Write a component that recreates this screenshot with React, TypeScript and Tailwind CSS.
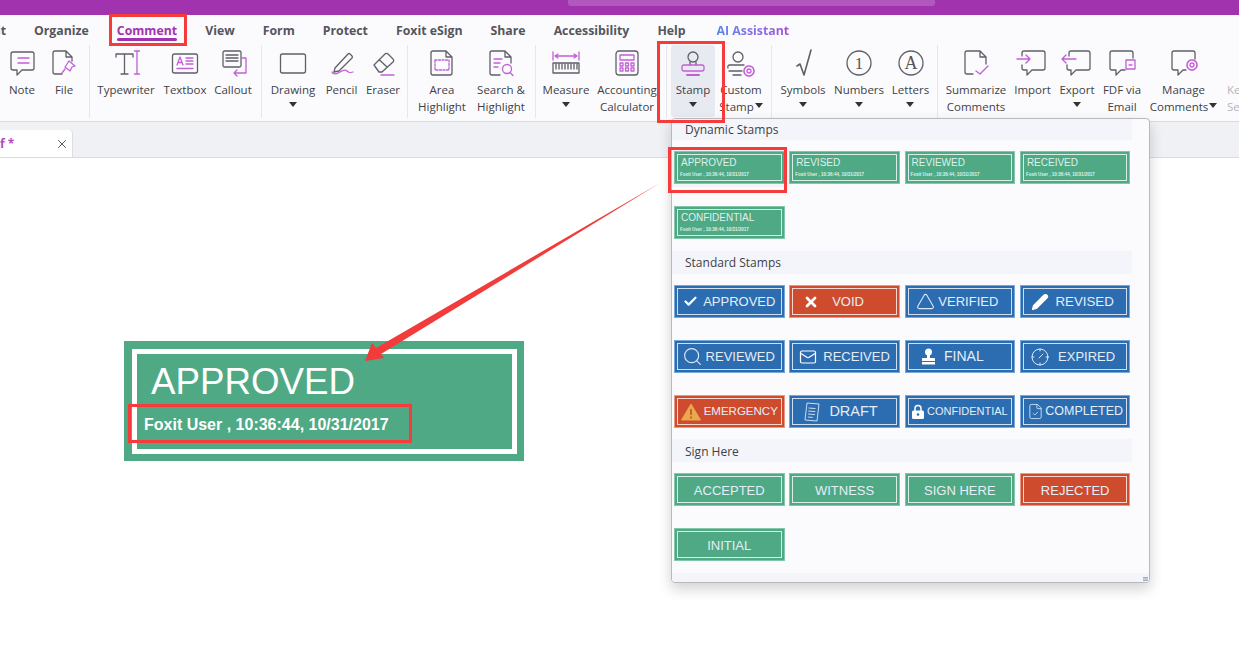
import type { ReactNode } from "react";
import { Check, X, Triangle, Pencil, Search, Mail, FileCheck } from "lucide-react";

const G = "#5f5f68";
const P = "#c25fd6";

function Ico({ children }: { children: ReactNode }) {
  return (
    <svg width="32" height="32" viewBox="0 0 32 32" fill="none" stroke={G} strokeWidth="1.3" strokeLinecap="round" strokeLinejoin="round" className="overflow-visible shrink-0">
      {children}
    </svg>
  );
}

const docPath = "M7 4h13l6 6v16a2 2 0 0 1-2 2H7a2 2 0 0 1-2-2V6a2 2 0 0 1 2-2z M20 4v6h6";

const gear = (cx: number, cy: number) => (
  <g stroke={P}>
    <circle cx={cx} cy={cy} r="5" strokeDasharray="2.6 0.7" strokeWidth="1.6" />
    <circle cx={cx} cy={cy} r="2" />
  </g>
);

const icons: Record<string, ReactNode> = {
  note: (
    <>
      <path d="M7 5h19a2 2 0 0 1 2 2v14a2 2 0 0 1-2 2H16l-5 5v-5H7a2 2 0 0 1-2-2V7a2 2 0 0 1 2-2z" />
      <path d="M12 11h11M12 16h11" stroke={P} />
    </>
  ),
  file: (
    <>
      <path d="M14 27H7a2 2 0 0 1-2-2V6a2 2 0 0 1 2-2h11l6 6v4M18 4v6h6" />
      <path d="M21 14l6 5-3 1-2 4-5-4 2-3zM17 22l-3 4" stroke={P} />
    </>
  ),
  typewriter: (
    <>
      <path d="M6 10V7h17v3M14.5 7v20M11 27h7" />
      <path d="M27 4v23M24.5 4h5M24.5 27h5" stroke={P} />
    </>
  ),
  textbox: (
    <>
      <rect x="3.5" y="7" width="25" height="19" rx="2" />
      <path d="M8 18l3-8 3 8M9 15.5h4M17 11h7M17 14h7M17 17h7M8 21.5h16" stroke={P} />
    </>
  ),
  callout: (
    <>
      <rect x="6" y="4" width="18" height="16" rx="1.5" />
      <path d="M9 8h12M9 11h12M9 14h12" />
      <path d="M25 11h4v15H17M20 23l-3 3 3 3" stroke={P} />
    </>
  ),
  drawing: <rect x="3.5" y="7" width="25" height="19" rx="2" />,
  pencil: (
    <>
      <path d="M9 21L22 7a1.5 1.5 0 0 1 2 0l2 2a1.5 1.5 0 0 1 0 2L13 24l-5 1z" />
      <path d="M6 25c1 3 5 2 8 0s5-3 7-1 3 2 6 1" stroke={P} />
    </>
  ),
  eraser: (
    <>
      <path d="M7 18L18 7a2 2 0 0 1 3 0l5 5a2 2 0 0 1 0 3L15 25h-3z M12 12.5l8 7.5" />
      <path d="M14 28h13" stroke={P} />
    </>
  ),
  area: (
    <>
      <path d={docPath} />
      <rect x="9" y="13" width="14" height="10" stroke={P} strokeDasharray="2 1.5" />
    </>
  ),
  searchHl: (
    <>
      <path d="M15 28H7a2 2 0 0 1-2-2V6a2 2 0 0 1 2-2h13l6 6v6M20 4v6h6" />
      <path d="M9 12h8M9 16h6M9 20h4" stroke={P} />
      <circle cx="22" cy="22" r="4.5" stroke={P} />
      <path d="M25 25.5l3 3" stroke={P} />
    </>
  ),
  measure: (
    <>
      <path d="M3 5v8M29 5v8M5 9h22M5 9l3-2M5 9l3 2M27 9l-3-2M27 9l-3 2" stroke={P} />
      <rect x="3" y="16" width="26" height="10" />
      <path d="M6 17v5M9 17v5M12 17v5M15 17v5M18 17v5M21 17v5M24 17v5M27 17v5" />
    </>
  ),
  calc: (
    <>
      <rect x="5" y="4" width="22" height="24" rx="3" />
      <rect x="9" y="8" width="14" height="5" stroke={P} />
      <path d="M9 16h3v3H9zM14.5 16h3v3h-3zM20 16h3v3h-3zM9 21h3v3H9zM14.5 21h3v3h-3zM20 21h3v3h-3z" stroke={P} />
    </>
  ),
  stamp: (
    <>
      <circle cx="16" cy="10" r="5" />
      <path d="M13 15v3M19 15v3" />
      <rect x="5" y="18" width="22" height="6" rx="2" stroke={P} />
      <path d="M10 28h12" stroke={P} strokeWidth="2" />
    </>
  ),
  customStamp: (
    <>
      <circle cx="13" cy="10" r="5" />
      <path d="M3 21a2 2 0 0 1 2-3h14M4 24h13M8 28h8" />
      {gear(24, 24)}
    </>
  ),
  symbols: <path d="M10 19l3-2 4 11 7-25" strokeWidth="1.6" />,
  numbers: (
    <>
      <circle cx="16" cy="16" r="12" />
      <text x="16" y="22" textAnchor="middle" fontFamily="Liberation Serif, serif" fontSize="17" fill="#555" stroke="none">1</text>
    </>
  ),
  letters: (
    <>
      <circle cx="16" cy="16" r="12" />
      <text x="16" y="22" textAnchor="middle" fontFamily="Liberation Serif, serif" fontSize="18" fill="#555" stroke="none">A</text>
    </>
  ),
  summarize: (
    <>
      <path d="M13 27H7a2 2 0 0 1-2-2V6a2 2 0 0 1 2-2h13l6 6v7M20 4v6h6" />
      <path d="M16 24l4 3 8-8" stroke={P} />
    </>
  ),
  import: (
    <>
      <path d="M5 9V6a2 2 0 0 1 2-2h19a2 2 0 0 1 2 2v15a2 2 0 0 1-2 2H15l-5 5v-5H7a2 2 0 0 1-2-2v-3" />
      <path d="M0 12h13M9 8l4 4-4 4" stroke={P} />
    </>
  ),
  export: (
    <>
      <path d="M8 9V6a2 2 0 0 1 2-2h17a2 2 0 0 1 2 2v15a2 2 0 0 1-2 2H15l-5 5v-5H8a2 2 0 0 1-2-2v-3" />
      <path d="M15 12H1M5 8l-4 4 4 4" stroke={P} />
    </>
  ),
  fdf: (
    <>
      <path d="M15 23l-5 5v-5H6a2 2 0 0 1-2-2V6a2 2 0 0 1 2-2h19a2 2 0 0 1 2 2v5M15 23h4" />
      <rect x="20" y="13" width="9" height="9" stroke={P} />
      <path d="M23 18h3" stroke={P} />
    </>
  ),
  manage: (
    <>
      <path d="M15 23l-5 5v-5H6a2 2 0 0 1-2-2V6a2 2 0 0 1 2-2h19a2 2 0 0 1 2 2v6M15 23h3" />
      {gear(24, 18)}
    </>
  ),
};

function Caret({ className = "" }: { className?: string }) {
  return <span className={`inline-block w-0 h-0 border-x-[4px] border-x-transparent border-t-[5px] border-t-[#333] ${className}`} />;
}

type Item = { icon?: string; lines?: string[]; w: string; caret?: "below" | "inline"; active?: boolean };

const ribbon: Item[] = [
  { icon: "note", lines: ["Note"], w: "w-[44px]" },
  { icon: "file", lines: ["File"], w: "w-[40px]" },
  { w: "w-[6px] border-r" },
  { icon: "typewriter", lines: ["Typewriter"], w: "w-[72px]" },
  { icon: "textbox", lines: ["Textbox"], w: "w-[46px]" },
  { icon: "callout", lines: ["Callout"], w: "w-[50px]" },
  { w: "w-[4px] border-r" },
  { icon: "drawing", lines: ["Drawing"], w: "w-[62px]", caret: "below" },
  { icon: "pencil", lines: ["Pencil"], w: "w-[35px]" },
  { icon: "eraser", lines: ["Eraser"], w: "w-[48px]" },
  { w: "w-[1px] border-r" },
  { icon: "area", lines: ["Area", "Highlight"], w: "w-[68px]" },
  { icon: "searchHl", lines: ["Search &", "Highlight"], w: "w-[50px]" },
  { w: "w-[10px] border-r" },
  { icon: "measure", lines: ["Measure"], w: "w-[60px]", caret: "below" },
  { icon: "calc", lines: ["Accounting", "Calculator"], w: "w-[62px]" },
  { w: "w-[9px] border-r mr-[4px]" },
  { icon: "stamp", lines: ["Stamp"], w: "w-[44px]", caret: "below", active: true },
  { icon: "customStamp", lines: ["Custom", "Stamp"], w: "w-[52px]", caret: "inline" },
  { w: "w-[5px] border-r" },
  { icon: "symbols", lines: ["Symbols"], w: "w-[62px]", caret: "below" },
  { icon: "numbers", lines: ["Numbers"], w: "w-[50px]", caret: "below" },
  { icon: "letters", lines: ["Letters"], w: "w-[53px]", caret: "below" },
  { w: "w-[1px] border-r" },
  { icon: "summarize", lines: ["Summarize", "Comments"], w: "w-[76px]" },
  { icon: "import", lines: ["Import"], w: "w-[37px]" },
  { icon: "export", lines: ["Export"], w: "w-[52px]", caret: "below" },
  { icon: "fdf", lines: ["FDF via", "Email"], w: "w-[38px]" },
  { icon: "manage", lines: ["Manage", "Comments"], w: "w-[85px]", caret: "inline" },
];

const tabs = ["Organize", "Comment", "View", "Form", "Protect", "Foxit eSign", "Share", "Accessibility", "Help"];

function RibbonItem({ item }: { item: Item }) {
  if (!item.icon) return <div className={`h-[73px] shrink-0 border-[#e6e7ee] ${item.w}`} />;
  return (
    <div className={`flex flex-col items-center h-[72px] shrink-0 pt-[2px] rounded-[3px] ${item.w} ${item.active ? "bg-[#e8eaf1]" : ""}`}>
      <Ico>{icons[item.icon]}</Ico>
      <div className="mt-[2px] text-[11.5px] leading-[17px] text-[#3f3f46] whitespace-nowrap text-center flex flex-col items-center">
        {item.lines!.map((l, i) => (
          <span key={l}>
            {l}
            {item.caret === "inline" && i === item.lines!.length - 1 && <Caret className="ml-[1px] mb-[3px]" />}
          </span>
        ))}
        {item.caret === "below" && <Caret className="mt-[4px]" />}
      </div>
    </div>
  );
}

type StampData = { text: string; color: "green" | "blue" | "red"; icon?: ReactNode; size?: string; gap?: string; sub?: boolean };

const tones = {
  green: "bg-[#4fa985] border-[#83c6aa]",
  blue: "bg-[#2c6cb0] border-[#79a8d8]",
  red: "bg-[#cf4b2e] border-[#e79a85]",
};
const inner = {
  green: "border-[#d8efe5]",
  blue: "border-[#cfe0f2]",
  red: "border-[#f6d8ce]",
};

function Stamp({ s, hover }: { s: StampData; hover?: boolean }) {
  return (
    <div className={`h-[33px] border p-[2px] ${tones[s.color]} ${hover ? "shadow-[0_0_0_3px_#f4f4f6]" : ""}`} style={{ fontFamily: "'Liberation Sans', Arial, sans-serif" }}>
      {s.sub ? (
        <div className={`h-full border pl-[3px] pt-[1px] text-[#dff1ea] ${inner[s.color]}`}>
          <div className="text-[10px] leading-[13px]">{s.text}</div>
          <div className="mt-[3px] -ml-[1px] text-[4.5px] leading-[6px] font-bold whitespace-nowrap">Foxit User , 10:36:44, 10/31/2017</div>
        </div>
      ) : (
        <div className={`h-full border flex items-center justify-center whitespace-nowrap text-[#e4eef7] ${inner[s.color]} ${s.size ?? "text-[13px]"} ${s.gap ?? "gap-[5px]"}`}>
          {s.icon}
          <span>{s.text}</span>
        </div>
      )}
    </div>
  );
}

const dynamicStamps: StampData[] = ["APPROVED", "REVISED", "REVIEWED", "RECEIVED", "CONFIDENTIAL"].map((text) => ({ text, color: "green", sub: true }));

const standardStamps: StampData[] = [
  { text: "APPROVED", color: "blue", icon: <Check size={15} strokeWidth={3.5} color="#fff" /> },
  { text: "VOID", color: "red", size: "text-[13px] pr-[22px]", gap: "gap-[13px]", icon: <X size={16} strokeWidth={4} color="#fff" /> },
  { text: "VERIFIED", color: "blue", size: "text-[13px] pr-[5px]", gap: "gap-[3px]", icon: <Triangle size={19} strokeWidth={1.4} color="#dbe8f5" /> },
  { text: "REVISED", color: "blue", size: "text-[13.3px] pr-[5px]", gap: "gap-[6px]", icon: <Pencil size={18} strokeWidth={1.5} color="#fff" fill="#fff" /> },
  { text: "REVIEWED", color: "blue", gap: "gap-[3px]", size: "text-[13px] pr-[2px]", icon: <Search size={21} strokeWidth={1.3} color="#dbe8f5" /> },
  { text: "RECEIVED", color: "blue", gap: "gap-[6px]", icon: <Mail size={18} strokeWidth={1.6} color="#fff" /> },
  {
    text: "FINAL",
    color: "blue",
    size: "text-[14px] pr-[14px]",
    gap: "gap-[9px]",
    icon: (
      <svg width="13" height="17" viewBox="0 0 13 17" fill="#fff">
        <circle cx="6.5" cy="4" r="3.5" />
        <path d="M5 7h3v3h4.5a.5.5 0 0 1 .5.5V13H0v-2.5a.5.5 0 0 1 .5-.5H5zM0 14h13v2.5H0z" />
      </svg>
    ),
  },
  {
    text: "EXPIRED",
    color: "blue",
    size: "text-[13px] pr-[4px]",
    gap: "gap-[9px]",
    icon: (
      <svg width="18" height="18" viewBox="0 0 18 18" fill="none" stroke="#dbe8f5" strokeWidth="1" strokeLinecap="round">
        <circle cx="9" cy="9" r="8" />
        <path d="M9 1v2M9 15v2M1 9h2M15 9h2M8 10l4-4" />
      </svg>
    ),
  },
  {
    text: "EMERGENCY",
    color: "red",
    size: "text-[11.5px]",
    gap: "gap-[3px]",
    icon: (
      <svg width="20" height="18" viewBox="0 0 20 18">
        <path d="M10 1l9.5 16H.5z" fill="#e8a84c" stroke="#e8a84c" strokeLinejoin="round" />
        <path d="M10 6v6M10 13.5v2" stroke="#cf4b2e" strokeWidth="1.6" />
      </svg>
    ),
  },
  {
    text: "DRAFT",
    color: "blue",
    size: "text-[14.5px] pr-[7px]",
    gap: "gap-[9px]",
    icon: (
      <svg width="16" height="20" viewBox="0 0 16 20" fill="none" stroke="#dbe8f5" strokeWidth="0.9">
        <path d="M3 1l12 1-2 17-12-1z" />
        <path d="M4.5 6l7 .6M4.3 9l7 .6M4 12l7 .6M3.800 15l5 .4" />
      </svg>
    ),
  },
  {
    text: "CONFIDENTIAL",
    color: "blue",
    size: "text-[11px]",
    gap: "gap-[3px]",
    icon: (
      <svg width="12" height="15" viewBox="0 0 12 15" fill="none">
        <path d="M3 7V4.500a3 3 0 0 1 6 0V7" stroke="#fff" strokeWidth="1.5" />
        <rect y="6.500" width="12" height="8.500" rx="1.5" fill="#fff" />
        <circle cx="6" cy="10.500" r="1.3" fill="#2c6cb0" />
      </svg>
    ),
  },
  { text: "COMPLETED", color: "blue", size: "text-[12.5px]", gap: "gap-[1px]", icon: <FileCheck size={17} strokeWidth={1.2} color="#dbe8f5" /> },
];

const signSize = "text-[13px] pt-[2px]";
const signStamps: StampData[] = [
  { text: "ACCEPTED", color: "green", size: signSize },
  { text: "WITNESS", color: "green", size: signSize },
  { text: "SIGN HERE", color: "green", size: signSize },
  { text: "REJECTED", color: "red", size: signSize },
  { text: "INITIAL", color: "green", size: signSize },
];

function SectionHead({ children, className }: { children: ReactNode; className: string }) {
  return <div className={`w-[460px] bg-[#f4f5fa] pl-[13px] text-[12px] text-[#3f3f46] ${className}`}>{children}</div>;
}

function StampGrid({ items, first }: { items: StampData[]; first?: boolean }) {
  return (
    <div className="grid grid-cols-[repeat(4,110.5px)] gap-x-[4.8px] gap-y-[22px] pl-[2px]">
      {items.map((s, i) => (
        <Stamp key={s.text} s={s} hover={first && i === 0} />
      ))}
    </div>
  );
}

function RedBox({ className }: { className: string }) {
  return <div className={`absolute border-[3px] border-[#f53b3b] pointer-events-none ${className}`} />;
}

export default function App() {
  return (
    <div className="relative w-[1239px] h-[661px] overflow-hidden bg-white" style={{ fontFamily: "'Open Sans', 'Noto Sans', sans-serif" }}>
      {/* title bar */}
      <div className="h-[15px] bg-[#a233ae] pl-[568px]">
        <div className="w-[367px] h-[6px] bg-[#b158bd] rounded-b-[3px]" />
      </div>

      {/* menu tabs */}
      <div className="h-[30px] bg-[#fbfbfe] flex items-start gap-[28px] pt-[7px] text-[12.3px] leading-[17px] font-bold text-[#55555c] whitespace-nowrap">
        <span className="w-[6px] overflow-hidden flex justify-end">
          <span>Edit</span>
        </span>
        {tabs.map((t) =>
          t === "Comment" ? (
            <span key={t} className="relative text-[#a233ae]">
              {t}
              <span className="absolute left-0 right-0 top-[16px] h-[3px] rounded-full bg-[#a233ae]" />
            </span>
          ) : (
            <span key={t}>{t}</span>
          )
        )}
        <span className="ml-[3px] bg-gradient-to-r from-[#4f86ea] to-[#a24fe0] bg-clip-text text-transparent">AI Assistant</span>
      </div>

      {/* ribbon */}
      <div className="h-[77px] bg-[#fbfbfe] border-b border-[#d9dae4] flex items-start">
        {ribbon.map((item, i) => (
          <RibbonItem key={i} item={item} />
        ))}
        <div className="ml-[1px] pt-[36px] text-[11.5px] leading-[17px] text-[#b5b5bb] whitespace-nowrap">
          <div>Keep Tool</div>
          <div>Selected</div>
        </div>
      </div>

      {/* document tabs */}
      <div className="h-[36px] bg-[#f0f1f5] border-b border-[#d9dae4] pt-[8px]">
        <div className="w-[73px] h-[27px] bg-white rounded-tr-[4px] border-r border-[#dcdde5] flex items-center justify-between pr-[3px]">
          <span className="text-[12px] font-bold text-[#b34cc4]">f *</span>
          <X size={14} strokeWidth={1.5} color="#444" />
        </div>
      </div>

      {/* page with the placed stamp */}
      <div className="pl-[124px] pt-[183px]">
        <div className="w-[400px] h-[120px] bg-[#4fa985] pt-[8px] pl-[8px] pr-[7px] pb-[7px]" style={{ fontFamily: "'Liberation Sans', Arial, sans-serif" }}>
          <div className="h-full border-[5px] border-white text-white">
            <div className="pl-[14px] pt-[7px] text-[36.7px] leading-[42px]">APPROVED</div>
            <div className="pl-[7px] mt-[12px] text-[16px] leading-[20px] font-bold whitespace-nowrap">Foxit User , 10:36:44, 10/31/2017</div>
          </div>
        </div>
      </div>

      {/* stamp dropdown */}
      <div className="absolute left-[671px] top-[118px] w-[479px] h-[465px] bg-[#fbfbfe] border border-[#b9b9bd] rounded-[4px] shadow-[0_6px_14px_rgba(0,0,0,0.18)] overflow-hidden flex flex-col">
        <SectionHead className="h-[21px] leading-[21px] mb-[11px]">Dynamic Stamps</SectionHead>
        <StampGrid items={dynamicStamps} first />
        <SectionHead className="h-[23px] leading-[24px] mt-[12px] mb-[11px]">Standard Stamps</SectionHead>
        <StampGrid items={standardStamps} />
        <SectionHead className="h-[23px] leading-[25px] mt-[11px] mb-[11px]">Sign Here</SectionHead>
        <StampGrid items={signStamps} />
        <div className="mt-[12px] flex-1 bg-[#f4f5fa] flex items-end justify-end pr-[1px] pb-[1px]">
          <div className="w-[5px] h-[4px] border-y border-[#a7adc0] bg-[#c4c9d8]" />
        </div>
      </div>

      {/* annotations */}
      <svg className="absolute inset-0 pointer-events-none" width="1239" height="661">
        <polygon points="660,183 381,354 384,358 365,361 372,343 376,348" fill="#f23c3c" />
      </svg>
      <RedBox className="left-[109px] top-[14px] w-[78px] h-[32px]" />
      <RedBox className="left-[657px] top-[41px] w-[68px] h-[82px]" />
      <RedBox className="left-[668px] top-[147px] w-[119px] h-[46px]" />
      <RedBox className="left-[128px] top-[404px] w-[284px] h-[39px]" />
    </div>
  );
}
